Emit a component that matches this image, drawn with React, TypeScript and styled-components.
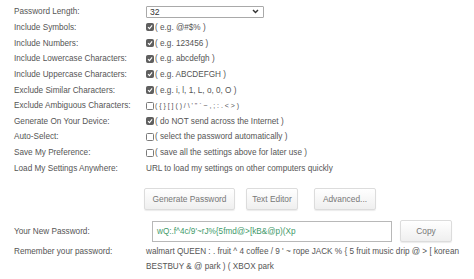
import { Fragment } from 'react';
import styled, { createGlobalStyle } from 'styled-components';

const GlobalStyle = createGlobalStyle`
  html, body {
    margin: 0;
    padding: 0;
    background: #ffffff;
  }
  body {
    font-family: 'Liberation Sans', Arial, sans-serif;
    color: #555555;
  }
`;

const Page = styled.div`
  width: 474px;
  height: 279px;
  padding: 4px 0 0 14px;
  box-sizing: border-box;
  overflow: hidden;
  font-size: 8.2px;
`;

const Form = styled.div`
  display: grid;
  grid-template-columns: 132px 1fr;
  grid-auto-rows: 15.65px;
  align-items: center;
`;

const Label = styled.div`
  white-space: nowrap;
`;

const Value = styled.div`
  display: flex;
  align-items: center;
  white-space: nowrap;
`;

const Select = styled.div`
  width: 118px;
  height: 12px;
  border: 1px solid #a9a9a9;
  border-radius: 1px;
  display: flex;
  align-items: center;
  justify-content: space-between;
  padding: 0 4px 0 3px;
  box-sizing: border-box;
  color: #333;
  font-size: 8.6px;
`;

const Box = styled.span<{ $checked?: boolean }>`
  display: inline-flex;
  align-items: center;
  justify-content: center;
  width: 8px;
  height: 8px;
  border-radius: 1.5px;
  box-sizing: border-box;
  margin-right: 1px;
  border: 1px solid ${(p) => (p.$checked ? '#5f5f5f' : '#7a7a7a')};
  background: ${(p) => (p.$checked ? '#5f5f5f' : '#ffffff')};
`;

const Ambig = styled.span`
  font-size: 7px;
  letter-spacing: 1.9px;
`;

const ButtonRow = styled.div`
  display: flex;
  margin: 12px 0 0 130px;
`;

const Button = styled.div<{ $w: number; $gap?: number }>`
  width: ${(p) => p.$w}px;
  margin-left: ${(p) => p.$gap ?? 0}px;
  height: 22px;
  box-sizing: border-box;
  display: flex;
  align-items: center;
  justify-content: center;
  border: 1px solid #dcdcdc;
  border-radius: 2px;
  background: linear-gradient(#ffffff, #efefef);
  box-shadow: 0 1px 1px rgba(0, 0, 0, 0.08);
  color: #777;
  font-size: 8.4px;
`;

const PwRow = styled.div`
  display: grid;
  grid-template-columns: 130px 240px 52px;
  column-gap: 8px;
  align-items: center;
  margin-top: 10px;
`;

const PwInput = styled.div`
  height: 21px;
  box-sizing: border-box;
  border: 1px solid #b8b8b8;
  display: flex;
  align-items: center;
  padding-left: 4px;
  color: #3f9a6a;
  white-space: nowrap;
  overflow: hidden;
`;

const RememberRow = styled.div`
  display: grid;
  grid-template-columns: 132px 1fr;
  margin-top: 3px;
  line-height: 14.5px;
`;

const Mnemonic = styled.div`
  white-space: nowrap;
`;

const Check = ({ checked }: { checked?: boolean }) => (
  <Box $checked={checked}>
    {checked && (
      <svg width="6" height="6" viewBox="0 0 6 6">
        <path d="M1 3.1 L2.5 4.6 L5.1 1.4" stroke="#fff" strokeWidth="1.1" fill="none" />
      </svg>
    )}
  </Box>
);

const rows: { label: string; checked?: boolean; text: string }[] = [
  { label: 'Include Symbols:', checked: true, text: '( e.g. @#$% )' },
  { label: 'Include Numbers:', checked: true, text: '( e.g. 123456 )' },
  { label: 'Include Lowercase Characters:', checked: true, text: '( e.g. abcdefgh )' },
  { label: 'Include Uppercase Characters:', checked: true, text: '( e.g. ABCDEFGH )' },
  { label: 'Exclude Similar Characters:', checked: true, text: '( e.g. i, l, 1, L, o, 0, O )' },
];

export default function App() {
  return (
    <>
      <GlobalStyle />
      <Page>
        <Form>
          <Label>Password Length:</Label>
          <Value>
            <Select>
              <span>32</span>
              <svg width="7" height="5" viewBox="0 0 7 5">
                <path d="M1 1 L3.5 3.6 L6 1" stroke="#333" strokeWidth="1.4" fill="none" />
              </svg>
            </Select>
          </Value>
          {rows.map((r) => (
            <Fragment key={r.label}>
              <Label>{r.label}</Label>
              <Value>
                <Check checked={r.checked} />
                {r.text}
              </Value>
            </Fragment>
          ))}
          <Label>Exclude Ambiguous Characters:</Label>
          <Value>
            <Check />
            <Ambig>{'({}[]()/\\\'"`~,;:.<>)'}</Ambig>
          </Value>
          <Label>Generate On Your Device:</Label>
          <Value>
            <Check checked />( do NOT send across the Internet )
          </Value>
          <Label>Auto-Select:</Label>
          <Value>
            <Check />( select the password automatically )
          </Value>
          <Label>Save My Preference:</Label>
          <Value>
            <Check />( save all the settings above for later use )
          </Value>
          <Label>Load My Settings Anywhere:</Label>
          <Value>URL to load my settings on other computers quickly</Value>
        </Form>
        <ButtonRow>
          <Button $w={91}>Generate Password</Button>
          <Button $w={52} $gap={11}>Text Editor</Button>
          <Button $w={62} $gap={16}>Advanced...</Button>
        </ButtonRow>
        <PwRow>
          <Label>Your New Password:</Label>
          <PwInput>{'wQ:.f^4c/9\'~rJ%{5fmd@>[kB&@p)(Xp'}</PwInput>
          <Button $w={52}>Copy</Button>
        </PwRow>
        <RememberRow>
          <Label>Remember your password:</Label>
          <Mnemonic>
            walmart QUEEN : . fruit ^ 4 coffee / 9 ' ~ rope JACK % {'{'} 5 fruit music drip @ &gt; [ korean
            <br />
            BESTBUY &amp; @ park ) ( XBOX park
          </Mnemonic>
        </RememberRow>
      </Page>
    </>
  );
}
